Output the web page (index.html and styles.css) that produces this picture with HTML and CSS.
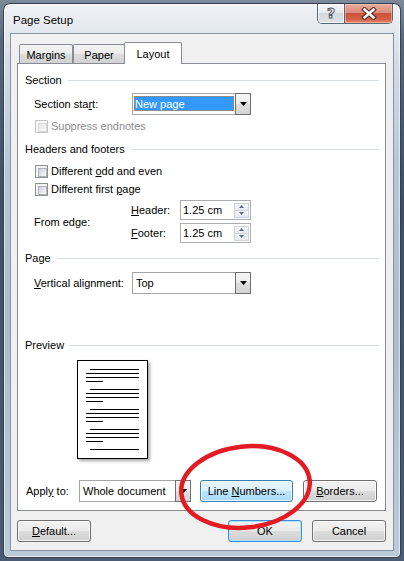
FILE: index.html
```html
<!DOCTYPE html>
<html lang="en">
<head>
<meta charset="utf-8">
<title>Page Setup</title>
<link rel="stylesheet" href="styles.css">
</head>
<body>
<div class="window">
  <div class="titlebar">
    <div class="title">Page Setup</div>
    <div class="caption">
      <div class="cap-btn cap-help"><span class="qmark">?</span></div>
      <div class="cap-btn cap-close">
        <svg width="18" height="13" viewBox="0 0 18 13"><path class="x-outline" d="M4.5 2.5 L13.5 10.5 M13.5 2.5 L4.5 10.5"/><path class="x-fill" d="M4.5 2.5 L13.5 10.5 M13.5 2.5 L4.5 10.5"/></svg>
      </div>
    </div>
  </div>
  <div class="client">
    <div class="tabstrip">
      <div class="tab tab-margins">Margins</div>
      <div class="tab tab-paper">Paper</div>
      <div class="tab tab-layout">Layout</div>
    </div>
    <div class="panel">
      <div class="group-head"><span>Section</span><i class="rule"></i></div>
      <div class="field-row r-start">
        <span class="label w98">Section sta<u>r</u>t:</span>
        <div class="combo w119">
          <div class="combo-text"><span class="combo-sel">New page</span></div>
          <div class="combo-btn"><svg width="7" height="4" viewBox="0 0 7 4"><polygon points="0,0 7,0 3.5,4" fill="#000"/></svg></div>
        </div>
      </div>
      <div class="check-row r-suppress disabled"><span class="chk"></span><span>Suppress endnotes</span></div>

      <div class="group-head r-hf"><span>Headers and footers</span><i class="rule"></i></div>
      <div class="check-row r-odd"><span class="chk"></span><span>Different <u>o</u>dd and even</span></div>
      <div class="check-row r-first"><span class="chk"></span><span>Different first <u>p</u>age</span></div>
      <div class="edge-row">
        <span class="label w97">From edge:</span>
        <div class="edge-fields">
          <div class="spin-row">
            <span class="label w49"><u>H</u>eader:</span>
            <div class="spin">
              <span class="spin-val">1.25 cm</span>
              <div class="spin-btns">
                <span class="spin-half"><svg width="5" height="3" viewBox="0 0 5 3"><polygon points="0,3 5,3 2.5,0" fill="#5a6c93"/></svg></span>
                <span class="spin-half"><svg width="5" height="3" viewBox="0 0 5 3"><polygon points="0,0 5,0 2.5,3" fill="#5a6c93"/></svg></span>
              </div>
            </div>
          </div>
          <div class="spin-row">
            <span class="label w49"><u>F</u>ooter:</span>
            <div class="spin">
              <span class="spin-val">1.25 cm</span>
              <div class="spin-btns">
                <span class="spin-half"><svg width="5" height="3" viewBox="0 0 5 3"><polygon points="0,3 5,3 2.5,0" fill="#5a6c93"/></svg></span>
                <span class="spin-half"><svg width="5" height="3" viewBox="0 0 5 3"><polygon points="0,0 5,0 2.5,3" fill="#5a6c93"/></svg></span>
              </div>
            </div>
          </div>
        </div>
      </div>

      <div class="group-head r-page"><span>Page</span><i class="rule"></i></div>
      <div class="field-row r-valign">
        <span class="label w98"><u>V</u>ertical alignment:</span>
        <div class="combo w119">
          <div class="combo-text"><span class="combo-plain">Top</span></div>
          <div class="combo-btn"><svg width="7" height="4" viewBox="0 0 7 4"><polygon points="0,0 7,0 3.5,4" fill="#000"/></svg></div>
        </div>
      </div>

      <div class="group-head r-preview"><span>Preview</span><i class="rule"></i></div>
      <div class="preview">
        <svg width="71" height="99" viewBox="0 0 71 99">
          <rect x="0.5" y="0.5" width="70" height="98" fill="#fff" stroke="#000"/>
          <g fill="#000">
            <rect x="13" y="9" width="49" height="1"/><rect x="9" y="13" width="53" height="1"/><rect x="9" y="17" width="53" height="1"/><rect x="9" y="21" width="17" height="1"/>
            <rect x="13" y="29" width="49" height="1"/><rect x="9" y="33" width="53" height="1"/><rect x="9" y="37" width="53" height="1"/><rect x="9" y="41" width="17" height="1"/>
            <rect x="13" y="49" width="49" height="1"/><rect x="9" y="53" width="53" height="1"/><rect x="9" y="57" width="53" height="1"/><rect x="9" y="61" width="17" height="1"/>
            <rect x="13" y="69" width="49" height="1"/><rect x="9" y="73" width="53" height="1"/><rect x="9" y="77" width="53" height="1"/><rect x="9" y="81" width="17" height="1"/>
            <rect x="13" y="89" width="49" height="1"/>
          </g>
        </svg>
      </div>

      <div class="apply-row">
        <span class="label w53">Appl<u>y</u> to:</span>
        <div class="combo w112">
          <div class="combo-text"><span class="combo-plain">Whole document</span></div>
          <div class="combo-btn"><svg width="7" height="4" viewBox="0 0 7 4"><polygon points="0,0 7,0 3.5,4" fill="#000"/></svg></div>
        </div>
        <div class="btn btn-hover btn-linenum"><span>Line <u>N</u>umbers...</span></div>
        <div class="btn btn-borders"><span><u>B</u>orders...</span></div>
      </div>
    </div>
    <div class="footer">
      <div class="btn btn-74"><span><u>D</u>efault...</span></div>
      <div class="btn btn-74 btn-default btn-ok"><span>OK</span></div>
      <div class="btn btn-74 btn-cancel"><span>Cancel</span></div>
    </div>
  </div>
</div>
<svg class="annotation" width="404" height="561" viewBox="0 0 404 561">
  <ellipse cx="245.5" cy="487" rx="64.5" ry="40.5" transform="rotate(-6 245.5 487)" fill="none" stroke="#e31b23" stroke-width="4.5"/>
</svg>
</body>
</html>
```

FILE: styles.css
```css
* { box-sizing: border-box; }
html, body { margin: 0; padding: 0; }
body {
  width: 404px;
  height: 561px;
  overflow: hidden;
  position: relative;
  padding: 3px 0 0 3px;
  background: linear-gradient(180deg, #7d8a99 0, #56667b 40px, #3d4e65 200px, #4a5b72 100%);
  font-family: "Liberation Sans", Arial, sans-serif;
  font-size: 11px;
  color: #000;
}
u { text-decoration: underline; text-underline-offset: 1px; }

.window {
  width: 398px;
  height: 555px;
  border: 1px solid rgba(30, 40, 55, 0.85);
  border-radius: 7px 7px 5px 5px;
  padding: 0 6px 6px 6px;
  display: flex;
  flex-direction: column;
  background: linear-gradient(180deg, #f0f2f5 0, #e4e9ee 26px, #d2dce6 60px, #b7c7d8 160px, #a9bcd0 320px, #bccbd9 100%);
  box-shadow: inset 0 0 0 1px rgba(255, 255, 255, 0.55);
}

.titlebar {
  height: 29px;
  display: flex;
  align-items: flex-start;
  justify-content: space-between;
  flex: none;
}
.title {
  font-size: 11.5px;
  padding: 10px 0 0 3px;
  color: #000;
  text-shadow: 0 0 6px rgba(255, 255, 255, 0.9);
}
.caption {
  display: flex;
  margin-right: 1px;
  height: 20px;
  border: 1px solid #5a6776;
  border-top: none;
  border-radius: 0 0 5px 5px;
  overflow: hidden;
}
.cap-btn {
  display: flex;
  align-items: center;
  justify-content: center;
  height: 100%;
}
.cap-help {
  width: 27px;
  border-right: 1px solid #5a6776;
  background: linear-gradient(180deg, #f6f7f9 0, #e6e9ed 45%, #d3d8de 50%, #dfe3e8 100%);
  box-shadow: inset 0 0 0 1px rgba(255,255,255,0.7);
}
.qmark {
  font-family: "DejaVu Sans", sans-serif;
  font-weight: bold;
  font-size: 14px;
  color: #fff;
  -webkit-text-stroke: 1px #4f5a66;
  line-height: 1;
  margin-top: -1px;
}
.cap-close {
  width: 47px;
  background: linear-gradient(180deg, #e9ab9c 0, #dc8c7b 45%, #c9533c 50%, #d46044 80%, #e48b6d 100%);
  box-shadow: inset 0 0 0 1px rgba(255,210,200,0.5);
}
.cap-close svg { display: block; }
.x-outline { stroke: #5a2a22; stroke-width: 4.6; stroke-linecap: square; fill: none; }
.x-fill { stroke: #ffffff; stroke-width: 2.6; stroke-linecap: square; fill: none; }

.client {
  width: 384px;
  height: 518px;
  border: 1px solid #8795a3;
  background: #f0f0f0;
  padding: 8px 7px 0 6px;
  display: flex;
  flex-direction: column;
}

.tabstrip {
  height: 21px;
  display: flex;
  align-items: flex-end;
  padding-left: 2px;
  flex: none;
}
.tab {
  height: 19px;
  border: 1px solid #898c95;
  border-bottom: none;
  border-radius: 2px 2px 0 0;
  background: linear-gradient(180deg, #f3f3f3 0, #ebebeb 50%, #dddddd 50%, #d2d2d2 100%);
  display: flex;
  align-items: center;
  justify-content: center;
  padding-top: 1px;
}
.tab-margins { width: 54px; }
.tab-paper { width: 52px; }
.tab-layout {
  width: 58px;
  height: 22px;
  margin-left: -1px;
  margin-bottom: -1px;
  background: #fff;
  position: relative;
  z-index: 1;
  padding-top: 0;
}

.panel {
  width: 369px;
  height: 448px;
  border: 1px solid #898c95;
  background: #fff;
  padding: 8px 6px 0 7px;
  display: flex;
  flex-direction: column;
  flex: none;
}

.group-head {
  height: 16px;
  display: flex;
  align-items: center;
  flex: none;
}
.rule {
  flex: 1;
  height: 1px;
  background: #d5dfe5;
  margin-left: 6px;
}
.r-hf { margin-top: 7px; }
.r-page { margin-top: 7px; }
.r-preview { margin-top: 43px; }

.label { flex: none; white-space: nowrap; }
.w98 { width: 98px; }
.w97 { width: 97px; }
.w49 { width: 49px; }
.w53 { width: 53px; }
.w119 { width: 119px; }
.w112 { width: 112px; }

.field-row {
  height: 22px;
  display: flex;
  align-items: center;
  padding-left: 9px;
  flex: none;
}
.r-start { margin-top: 5px; }
.r-valign { margin-top: 6px; }

.combo {
  height: 22px;
  border: 1px solid #a5a5a5;
  display: flex;
  flex: none;
  background: #fff;
}
.combo-text {
  flex: 1;
  display: flex;
  align-items: center;
  padding-left: 2px;
  overflow: hidden;
}
.combo-sel {
  flex: 1;
  height: 15px;
  margin: 0 1px 1px -1px;
  padding-left: 1px;
  background: #3399ff;
  color: #fff;
  outline: 1px dotted #d9822b;
  outline-offset: -1px;
  display: flex;
  align-items: center;
  white-space: nowrap;
}
.combo-plain { white-space: nowrap; padding-left: 1px; }
.combo-btn {
  width: 16px;
  border: 1px solid #6f6f6f;
  background: linear-gradient(180deg, #f6f6f6 0, #ececec 50%, #dedede 50%, #d4d4d4 100%);
  display: flex;
  align-items: center;
  justify-content: center;
  margin: -1px -1px -1px 0;
}
.combo-btn svg { display: block; }

.check-row {
  height: 16px;
  display: flex;
  align-items: center;
  padding-left: 10px;
  flex: none;
}
.r-suppress { margin-top: 3px; }
.r-odd { margin-top: 6px; }
.r-first { margin-top: 2px; }
.chk {
  width: 13px;
  height: 13px;
  border: 1px solid #8e8f8f;
  padding: 2px;
  background: #f4f4f4;
  margin-right: 3px;
  flex: none;
}
.chk::after {
  content: "";
  display: block;
  width: 7px;
  height: 7px;
  border: 1px solid #b0b5bb;
  background: linear-gradient(135deg, #cbcfd4 0, #e6e8ea 55%, #f8f8f8 100%);
}
.disabled { color: #8d8d8d; }
.disabled .chk { border-color: #c4c4c4; background: #f8f8f8; }
.disabled .chk::after { border-color: #dadada; background: linear-gradient(135deg, #e6e6e6, #fafafa); }

.edge-row {
  height: 43px;
  margin-top: 3px;
  display: flex;
  align-items: center;
  padding-left: 9px;
  flex: none;
}
.edge-fields {
  display: flex;
  flex-direction: column;
  gap: 3px;
}
.spin-row {
  height: 20px;
  display: flex;
  align-items: center;
}
.spin {
  width: 71px;
  height: 20px;
  border: 1px solid #abadb3;
  background: #fff;
  display: flex;
  align-items: center;
}
.spin-val { flex: 1; padding-left: 2px; white-space: nowrap; }
.spin-btns {
  width: 15px;
  height: 15px;
  margin-right: 1px;
  display: flex;
  flex-direction: column;
}
.spin-half {
  flex: 1;
  border: 1px solid #ccd3dc;
  background: linear-gradient(180deg, #f7f8fa 0, #e6eaef 100%);
  display: flex;
  align-items: center;
  justify-content: center;
}
.spin-half + .spin-half { border-top: none; }
.spin-half svg { display: block; }

.preview {
  margin-top: 7px;
  margin-left: 52px;
  width: 71px;
  height: 99px;
  flex: none;
  box-shadow: 2px 2px 3px rgba(0, 0, 0, 0.35);
}
.preview svg { display: block; }

.apply-row {
  height: 22px;
  margin-top: 21px;
  display: flex;
  align-items: center;
  padding-left: 1px;
  flex: none;
}

.btn {
  height: 22px;
  border: 1px solid #707070;
  border-radius: 3px;
  background: linear-gradient(180deg, #f2f2f2 0, #ebebeb 50%, #dddddd 50%, #cfcfcf 100%);
  box-shadow: inset 0 0 0 1px rgba(255, 255, 255, 0.75);
  display: flex;
  align-items: center;
  justify-content: center;
  white-space: nowrap;
  flex: none;
}
.btn-hover {
  border-color: #3c7fb1;
  background: linear-gradient(180deg, #eaf6fd 0, #d9f0fc 50%, #bee6fd 50%, #a7d9f5 100%);
}
.btn-linenum { width: 93px; margin-left: 9px; }
.btn-borders { width: 74px; margin-left: 10px; }

.footer {
  height: 22px;
  margin-top: 9px;
  display: flex;
  flex: none;
}
.btn-74 { width: 74px; }
.btn-default {
  border-color: #3c8fd8;
  box-shadow: inset 0 0 0 1px #a9e2f9;
}
.btn-ok { margin-left: auto; }
.btn-cancel { margin-left: 10px; }

.annotation {
  position: absolute;
  left: 0;
  top: 0;
  pointer-events: none;
}
```
